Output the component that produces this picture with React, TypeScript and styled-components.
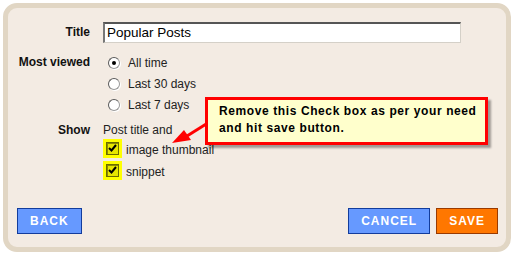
import { createGlobalStyle, styled } from "styled-components";

const GlobalStyle = createGlobalStyle`
    html, body {
        margin: 0;
        padding: 0;
        background: #ffffff;
    }
    body {
        font-family: "Liberation Sans", Arial, sans-serif;
        font-size: 12px;
        color: #222222;
    }
`;

const Frame = styled.div`
    position: relative;
    box-sizing: border-box;
    margin: 3px 0 0 3px;
    width: 508px;
    height: 249px;
    border: 5px solid #e1d6c4;
    border-radius: 14px;
    background: #f3ebe3;
    padding: 14px 8px 13px 9px;
    display: flex;
    flex-direction: column;
`;

const Form = styled.div`
    display: grid;
    grid-template-columns: 73px 1fr;
    column-gap: 13px;
    row-gap: 6px;
    align-items: start;
`;

const Label = styled.div<{ $top: number }>`
    font-weight: bold;
    font-size: 12px;
    color: #111111;
    text-align: right;
    padding-top: ${(p) => p.$top}px;
    line-height: 15px;
`;

const TextInput = styled.div`
    box-sizing: border-box;
    width: 358px;
    height: 21px;
    background: #ffffff;
    border-top: 2px solid #555555;
    border-left: 2px solid #777777;
    border-right: 1px solid #d4d0c8;
    border-bottom: 1px solid #d4d0c8;
    font-size: 13.5px;
    line-height: 18px;
    padding-left: 2px;
    color: #000000;
`;

const Options = styled.div`
    display: flex;
    flex-direction: column;
    padding: 3px 0 0 5px;
`;

const Option = styled.div`
    display: flex;
    align-items: center;
    height: 21px;
    gap: 8px;
    font-size: 12px;
`;

const Radio = styled.span<{ $on?: boolean }>`
    box-sizing: border-box;
    width: 12px;
    height: 12px;
    border-radius: 50%;
    background: #ffffff;
    border: 1px solid #9a9a9a;
    border-top-color: #5a5a5a;
    border-left-color: #5a5a5a;
    box-shadow: 1px 1px 0 #ffffff;
    display: flex;
    align-items: center;
    justify-content: center;

    &::after {
        content: "";
        width: 4px;
        height: 4px;
        border-radius: 50%;
        background: ${(p) => (p.$on ? "#000000" : "transparent")};
    }
`;

const ShowBlock = styled.div`
    display: flex;
    flex-direction: column;
`;

const Intro = styled.div`
    height: 16px;
    line-height: 18px;
    font-size: 12px;
`;

const CheckRow = styled.div`
    display: flex;
    align-items: center;
    gap: 4px;
    height: 22px;
    font-size: 12px;
`;

const CheckText = styled.span`
    padding-top: 4px;
`;

const Highlight = styled.span`
    box-sizing: border-box;
    width: 19px;
    height: 19px;
    background: #ffff00;
    display: flex;
    align-items: center;
    justify-content: center;
`;

const CheckBox = styled.span`
    box-sizing: border-box;
    width: 13px;
    height: 13px;
    background: #e6e600;
    border: 1px solid #6b6b00;
    box-shadow: inset 1px 1px 0 #8c8c00;
    display: flex;
    align-items: center;
    justify-content: center;
`;

const Buttons = styled.div`
    margin-top: auto;
    display: flex;
    align-items: center;
    gap: 6px;
`;

const Spacer = styled.div`
    flex: 1;
`;

const Button = styled.div<{ $tone: "blue" | "orange" }>`
    box-sizing: border-box;
    height: 26px;
    padding: 0 12px;
    display: flex;
    align-items: center;
    justify-content: center;
    font-weight: bold;
    font-size: 12px;
    letter-spacing: 1px;
    color: #ffffff;
    background: ${(p) => (p.$tone === "blue" ? "#6699ff" : "#ff7700")};
    border: 1px solid ${(p) => (p.$tone === "blue" ? "#123c9c" : "#993a00")};
`;

const Callout = styled.div`
    position: absolute;
    left: 197px;
    top: 89px;
    box-sizing: border-box;
    width: 283px;
    height: 48px;
    border: 3px solid #ff0000;
    background: #ffffcc;
    box-shadow: 3px 3px 2px rgba(0, 0, 0, 0.35);
    padding: 3px 0 0 11px;
    font-weight: bold;
    font-size: 12px;
    letter-spacing: 0.6px;
    line-height: 17px;
    color: #000000;
`;

const Arrow = styled.svg`
    position: absolute;
    left: 157px;
    top: 106px;
    overflow: visible;
`;

function Tick() {
    return (
        <svg width="9" height="8" viewBox="0 0 9 8">
            <path d="M1 4 L3.5 6.5 L8 1" fill="none" stroke="#000" strokeWidth="2" />
        </svg>
    );
}

export default function App() {
    return (
        <>
            <GlobalStyle />
            <Frame>
                <Form>
                    <Label $top={3}>Title</Label>
                    <TextInput>Popular Posts</TextInput>

                    <Label $top={6}>Most viewed</Label>
                    <Options>
                        <Option>
                            <Radio $on />
                            All time
                        </Option>
                        <Option>
                            <Radio />
                            Last 30 days
                        </Option>
                        <Option>
                            <Radio />
                            Last 7 days
                        </Option>
                    </Options>

                    <Label $top={2}>Show</Label>
                    <ShowBlock>
                        <Intro>Post title and</Intro>
                        <CheckRow>
                            <Highlight>
                                <CheckBox>
                                    <Tick />
                                </CheckBox>
                            </Highlight>
                            <CheckText>image thumbnail</CheckText>
                        </CheckRow>
                        <CheckRow>
                            <Highlight>
                                <CheckBox>
                                    <Tick />
                                </CheckBox>
                            </Highlight>
                            <CheckText>snippet</CheckText>
                        </CheckRow>
                    </ShowBlock>
                </Form>

                <Buttons>
                    <Button $tone="blue">BACK</Button>
                    <Spacer />
                    <Button $tone="blue">CANCEL</Button>
                    <Button $tone="orange">SAVE</Button>
                </Buttons>

                <Arrow width="50" height="35" viewBox="0 0 50 35">
                    <line x1="46" y1="7" x2="22" y2="22" stroke="#ff0000" strokeWidth="3" />
                    <polygon points="7,29 19,16 26,26" fill="#ff0000" />
                </Arrow>

                <Callout>
                    Remove this Check box as per your need
                    <br />
                    and hit save button.
                </Callout>
            </Frame>
        </>
    );
}
